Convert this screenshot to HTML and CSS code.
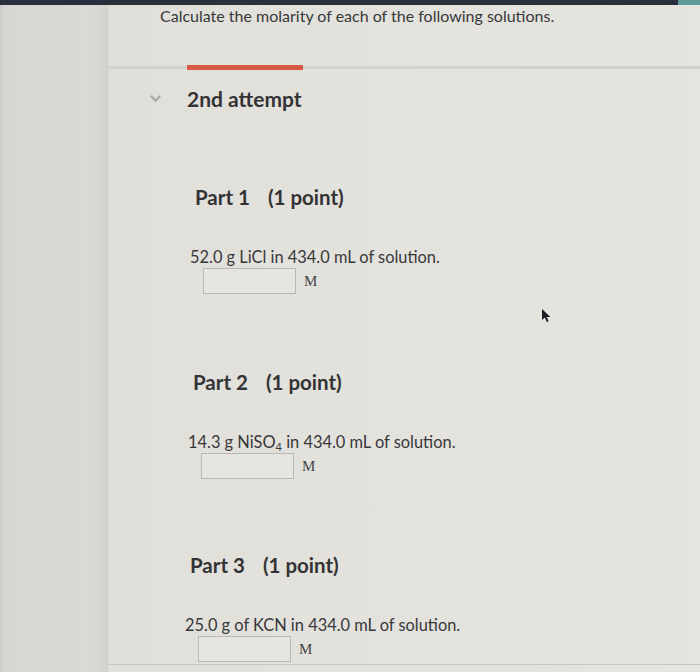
FILE: index.html
```html
<!DOCTYPE html>
<html lang="en">
<head>
<meta charset="utf-8">
<title>Molarity</title>
<link rel="stylesheet" href="styles.css">
</head>
<body>
<div class="topbar"><div class="topbar-navy"></div><div class="topbar-teal"></div></div>
<div class="layout">
  <aside class="sidebar"></aside>
  <main class="main">
    <p class="prompt">Calculate the molarity of each of the following solutions.</p>
    <div class="tabs"><span class="tab-active"></span></div>
    <div class="attempt">
      <svg class="chevron" width="11" height="8" viewBox="0 0 11 8"><path d="M1.5 1.5 L5.5 5.8 L9.5 1.5" fill="none" stroke="#a9a9a6" stroke-width="2.2" stroke-linecap="round" stroke-linejoin="round"/></svg>
      <h2 class="attempt-title">2nd attempt</h2>
    </div>
    <section class="part part-1">
      <h3 class="part-title"><span>Part 1</span><span>(1 point)</span></h3>
      <p class="question">52.0 g LiCl in 434.0 mL of solution.</p>
      <div class="answer"><span class="answer-box"></span><span class="unit">M</span></div>
    </section>
    <section class="part part-2">
      <h3 class="part-title"><span>Part 2</span><span>(1 point)</span></h3>
      <p class="question">14.3 g NiSO<sub>4</sub> in 434.0 mL of solution.</p>
      <div class="answer"><span class="answer-box"></span><span class="unit">M</span></div>
    </section>
    <section class="part part-3">
      <h3 class="part-title"><span>Part 3</span><span>(1 point)</span></h3>
      <p class="question">25.0 g of KCN in 434.0 mL of solution.</p>
      <div class="answer"><span class="answer-box"></span><span class="unit">M</span></div>
    </section>
    <div class="bottom-rule"></div>
    <svg class="cursor" width="12" height="16" viewBox="0 0 12 16"><path d="M1 1 L1 12 L3.8 9.6 L5.8 14 L7.6 13.2 L5.7 8.9 L9.4 8.9 Z" fill="#1e1e22"/></svg>
  </main>
</div>
</body>
</html>
```
FILE: styles.css
```css
html, body {
  margin: 0;
  padding: 0;
  height: 672px;
  overflow: hidden;
  background: #e2e1dc;
  font-family: Lato, "Open Sans", sans-serif;
  color: #38383a;
}

.topbar {
  display: flex;
  height: 5px;
}
.topbar-navy { flex: 1; background: #2b2f3b; }
.topbar-teal { width: 22px; background: #5f9b9c; }

.layout {
  display: flex;
  height: 667px;
}

.sidebar {
  width: 107px;
  flex: none;
  background: linear-gradient(90deg, #c9c9c7 0, #d6d6d3 3px, #d9d9d6 90px, #d3d3d0 107px);
  border-right: 1px solid #cfcfcb;
}

.main {
  flex: 1;
  position: relative;
  background: linear-gradient(90deg, #e0dfda 0, #e3e2dd 50%, #e5e4df 100%);
}

.prompt {
  margin: 1px 0 0 52px;
  font-size: 16px;
  line-height: 20px;
  color: #38383a;
}

.tabs {
  margin-top: 39px;
  height: 5px;
  display: flex;
  align-items: center;
  background: linear-gradient(#0000 1px, #d2d1cc 1px, #d2d1cc 4px, #0000 4px);
}
.tab-active {
  margin-left: 79px;
  width: 116px;
  height: 5px;
  background: #d85a44;
}

.attempt {
  margin-top: 16px;
  margin-left: 42px;
  display: flex;
  align-items: center;
  gap: 26px;
  height: 26px;
}
.chevron { flex: none; }
.attempt-title {
  margin: 0;
  font-size: 21px;
  font-weight: 700;
  line-height: 26px;
  color: #333335;
}

.part-1 { margin-top: 73px; padding-left: 82px; }
.part-2 { margin-top: 76px; padding-left: 80px; }
.part-3 { margin-top: 74px; padding-left: 77px; }

.part-title {
  margin: 0;
  padding-left: 5px;
  display: flex;
  gap: 18px;
  font-size: 20.5px;
  font-weight: 700;
  line-height: 24px;
  color: #333335;
}

.question {
  margin: 38px 0 0 0;
  font-size: 16.4px;
  line-height: 20px;
  color: #38383a;
}
.question sub {
  font-size: 11px;
  line-height: 0;
  vertical-align: -3px;
}

.answer {
  margin-top: 1px;
  margin-left: 13px;
  display: flex;
  align-items: center;
  gap: 8px;
  height: 26px;
}
.answer-box {
  width: 91px;
  height: 24px;
  border: 1px solid #b9b8b4;
  background: #e6e5e1;
}
.unit {
  font-family: "Liberation Serif", "Times New Roman", serif;
  font-size: 15px;
  color: #444446;
}

.bottom-rule {
  margin-top: 2px;
  height: 1px;
  background: #c6c5c0;
}

.cursor {
  position: absolute;
  left: 433px;
  top: 303px;
}
```
